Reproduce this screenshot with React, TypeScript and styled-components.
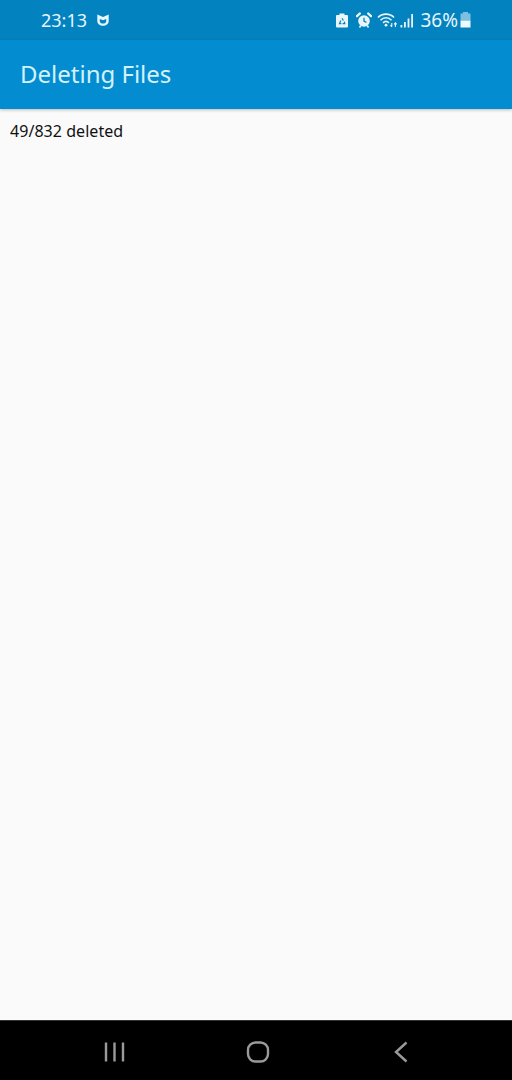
import styled, { createGlobalStyle } from 'styled-components';

const GlobalStyle = createGlobalStyle`
  html, body {
    margin: 0;
    padding: 0;
    background: #fafafa;
  }
  * {
    box-sizing: border-box;
  }
`;

const Screen = styled.div`
  width: 512px;
  height: 1080px;
  display: flex;
  flex-direction: column;
  background: #fafafa;
  font-family: 'Noto Sans', 'Open Sans', sans-serif;
  overflow: hidden;
`;

const StatusBar = styled.div`
  height: 40px;
  flex: none;
  background: #0382c0;
  display: flex;
  align-items: center;
  justify-content: space-between;
  padding: 0 41px 0 41px;
  color: #e8f6fc;
`;

const StatusGroup = styled.div`
  display: flex;
  align-items: center;
`;

const StatusIcon = styled.span<{ $left: number }>`
  display: flex;
  margin-left: ${(p) => p.$left}px;
`;

const Clock = styled.span`
  font-size: 18px;
`;

const Battery = styled.span`
  font-size: 19px;
  margin-left: 6px;
`;

const AppBar = styled.header`
  height: 69px;
  flex: none;
  background: #038dd0;
  box-shadow: 0 1px 3px rgba(0, 0, 0, 0.25);
  display: flex;
  align-items: center;
  padding: 0 20px 2px;
`;

const Title = styled.h1`
  margin: 0;
  font-size: 24px;
  font-weight: 400;
  color: #d4f1fb;
`;

const Content = styled.main`
  flex: 1;
  padding: 12px 10px;
`;

const Progress = styled.div`
  font-size: 16px;
  line-height: 20px;
  letter-spacing: 0.05px;
  color: #111;
`;

const NavBar = styled.nav`
  height: 60px;
  flex: none;
  background: #000;
  border-top: 1px solid #333;
  display: grid;
  grid-template-columns: repeat(3, 143px);
  justify-content: center;
  padding-left: 4px;
  align-items: center;
`;

const NavSlot = styled.div`
  display: flex;
  justify-content: center;
  align-items: center;
  padding-top: 2px;
`;

const MiIcon = () => (
  <svg width="12" height="12" viewBox="0 0 12 12">
    <path
      d="M0.3 0.5 L6 3 L11.7 0.5 V7 C11.7 10 9 11.8 6 11.8 C3 11.8 0.3 10 0.3 7 Z"
      fill="currentColor"
    />
    <path
      d="M2.8 5 L6 6.3 L9.2 5 V7.2 C9.2 8.6 7.7 9.5 6 9.5 C4.3 9.5 2.8 8.6 2.8 7.2 Z"
      fill="#0382c0"
    />
  </svg>
);

const RecycleBatteryIcon = () => (
  <svg width="12" height="15" viewBox="0 0 12 15">
    <path d="M3.5 0.5h5v1.5h2.5a1 1 0 0 1 1 1v10.5a1 1 0 0 1-1 1h-10a1 1 0 0 1-1-1V3a1 1 0 0 1 1-1h2.5z" fill="currentColor" />
    <path d="M6 5.2 L7.4 7.5 M4.8 7.5 L3.5 10.6 H5.4 M8.2 8.6 L8.8 10.6 H6.6" fill="none" stroke="#0382c0" strokeWidth="1.2" />
  </svg>
);

const AlarmIcon = () => (
  <svg width="16" height="16" viewBox="0 0 16 16">
    <circle cx="8" cy="9" r="5.8" fill="currentColor" />
    <path d="M8 5.8v3.4l2.4 1.2" fill="none" stroke="#0382c0" strokeWidth="1.3" />
    <path d="M1 4.2 L3.8 1.5 M15 4.2 L12.2 1.5" stroke="currentColor" strokeWidth="2.4" strokeLinecap="round" />
    <path d="M3.5 15.5 L4.8 13.5 M12.5 15.5 L11.2 13.5" stroke="currentColor" strokeWidth="1.6" />
  </svg>
);

const WifiIcon = () => (
  <svg width="21" height="16" viewBox="0 0 21 16" fill="none" stroke="currentColor">
    <path d="M1 5.5 C5 1 13 1 17 5.5" strokeWidth="1.6" />
    <path d="M3.5 8.2 C6.5 5 11.5 5 14.5 8.2" strokeWidth="1.6" />
    <path d="M6 10.8 C8 9 10 9 12 10.8" strokeWidth="1.6" />
    <circle cx="9" cy="13.2" r="1.4" fill="currentColor" stroke="none" />
    <path d="M14.8 11v3.5 M13.5 13.2 L14.8 14.8 M18.4 15 v-4 M17.2 12.4 L18.4 10.8 L19.6 12.4" strokeWidth="1.1" />
  </svg>
);

const SignalIcon = () => (
  <svg width="14" height="15" viewBox="0 0 14 15" fill="currentColor">
    <rect x="0.5" y="12" width="1.8" height="2.5" />
    <rect x="4" y="9" width="1.8" height="5.5" />
    <rect x="7.6" y="5.5" width="1.8" height="9" />
    <rect x="11.2" y="1" width="1.8" height="13.5" />
  </svg>
);

const BatteryIcon = () => (
  <svg width="11" height="16" viewBox="0 0 11 16">
    <rect x="3" y="0" width="5" height="2" fill="#7fc0e0" />
    <rect x="0.5" y="1.5" width="10" height="7" fill="#7fc0e0" />
    <rect x="0.5" y="8.5" width="10" height="7" fill="#eef9fd" />
  </svg>
);

const RecentsIcon = () => (
  <svg width="24" height="24" viewBox="0 0 24 24" stroke="#9a9a9a" strokeWidth="2.4">
    <path d="M3 2.5v19 M11.5 2.5v19 M20 2.5v19" />
  </svg>
);

const HomeIcon = () => (
  <svg width="24" height="24" viewBox="0 0 24 24" fill="none">
    <rect x="2" y="2.5" width="20" height="19" rx="7.5" stroke="#9a9a9a" strokeWidth="2.4" />
  </svg>
);

const BackIcon = () => (
  <svg width="24" height="24" viewBox="0 0 24 24" fill="none">
    <path d="M17.5 2.5 L7 12 L17.5 21.5" stroke="#9a9a9a" strokeWidth="2.4" />
  </svg>
);

const App = () => (
  <Screen>
    <GlobalStyle />
    <StatusBar>
      <StatusGroup>
        <Clock>23:13</Clock>
        <StatusIcon $left={10}>
          <MiIcon />
        </StatusIcon>
      </StatusGroup>
      <StatusGroup>
        <StatusIcon $left={0}>
          <RecycleBatteryIcon />
        </StatusIcon>
        <StatusIcon $left={8}>
          <AlarmIcon />
        </StatusIcon>
        <StatusIcon $left={5}>
          <WifiIcon />
        </StatusIcon>
        <StatusIcon $left={2}>
          <SignalIcon />
        </StatusIcon>
        <Battery>36%</Battery>
        <StatusIcon $left={2}>
          <BatteryIcon />
        </StatusIcon>
      </StatusGroup>
    </StatusBar>
    <AppBar>
      <Title>Deleting Files</Title>
    </AppBar>
    <Content>
      <Progress>49/832 deleted</Progress>
    </Content>
    <NavBar>
      <NavSlot>
        <RecentsIcon />
      </NavSlot>
      <NavSlot>
        <HomeIcon />
      </NavSlot>
      <NavSlot>
        <BackIcon />
      </NavSlot>
    </NavBar>
  </Screen>
);

export default App;
